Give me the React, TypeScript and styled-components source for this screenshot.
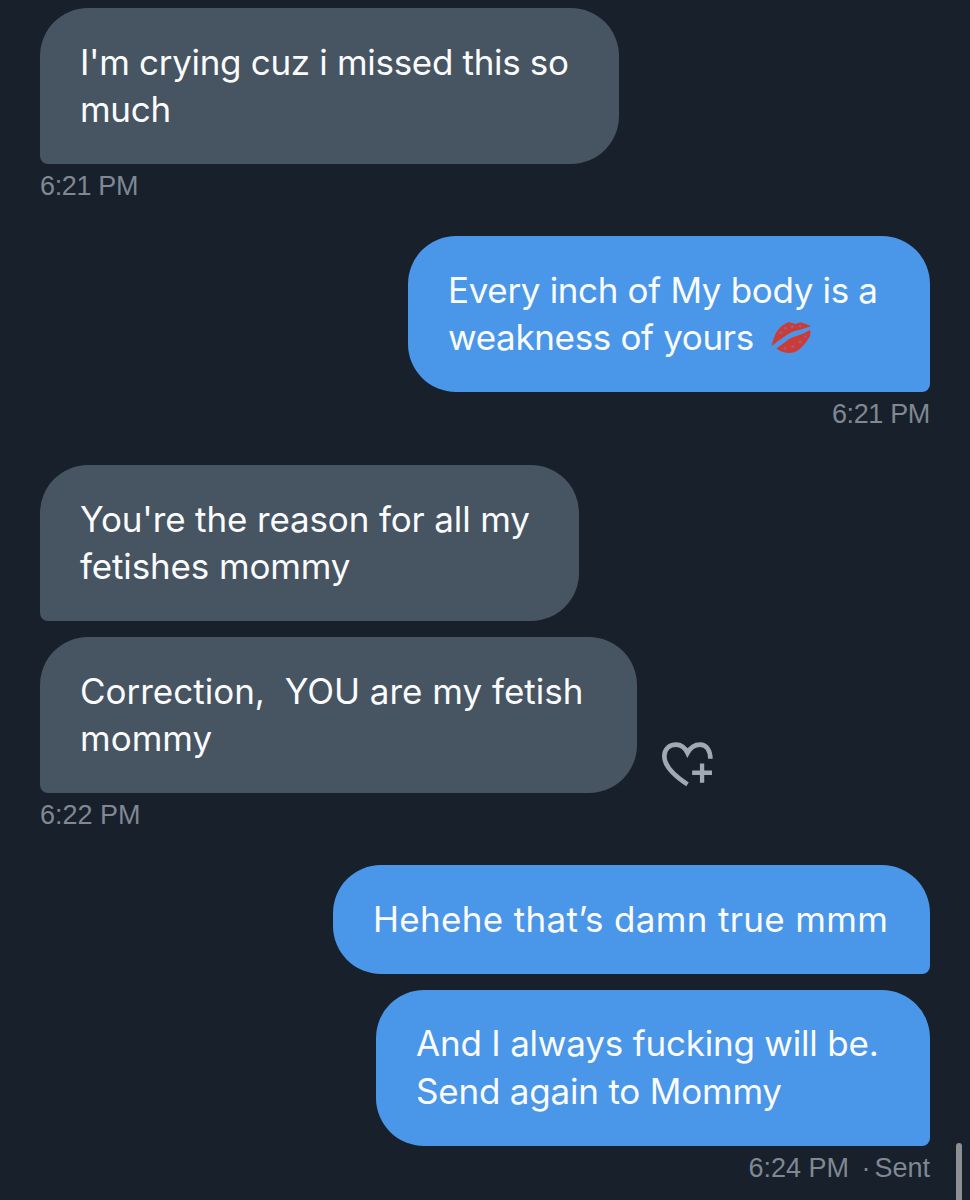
import React from "react";
import styled, { createGlobalStyle } from "styled-components";

const GlobalStyle = createGlobalStyle`
  html, body {
    margin: 0;
    padding: 0;
    background: #18202b;
  }
`;

const Page = styled.div`
  position: relative;
  box-sizing: border-box;
  width: 970px;
  height: 1200px;
  padding: 8px 40px 0;
  overflow: hidden;
  display: flex;
  flex-direction: column;
  font-family: "Inter", "Liberation Sans", sans-serif;
`;

const Group = styled.div<{ $mine?: boolean; $gap: number }>`
  display: flex;
  flex-direction: column;
  align-items: ${(p) => (p.$mine ? "flex-end" : "flex-start")};
  margin-bottom: ${(p) => p.$gap}px;
`;

const Row = styled.div`
  display: flex;
  align-items: flex-end;

  & + & {
    margin-top: 16px;
  }
`;

const Bubble = styled.div<{ $mine?: boolean; $width: number; $spacing?: number }>`
  box-sizing: border-box;
  width: ${(p) => p.$width}px;
  padding: 30.5px 0 30.5px 40px;
  font-size: 35px;
  line-height: 47.5px;
  letter-spacing: ${(p) => p.$spacing ?? 0}px;
  color: #fafbfc;
  white-space: nowrap;
  background: ${(p) => (p.$mine ? "#4a97e9" : "#475461")};
  border-radius: ${(p) => (p.$mine ? "48px 48px 8px 48px" : "48px 48px 48px 8px")};
`;

const Stamp = styled.div<{ $spacing?: number }>`
  margin-top: 10px;
  font-family: "Liberation Sans", Arial, sans-serif;
  font-size: 27px;
  line-height: 24px;
  letter-spacing: ${(p) => p.$spacing ?? 0}px;
  color: #7f8893;
`;

const SentMark = styled.span`
  margin-left: 5px;
  word-spacing: -3.5px;
`;

const LikeButton = styled.svg`
  width: 53px;
  height: 47px;
  margin: 0 0 6px 24px;
  fill: none;
  stroke: #a1a9b4;
  stroke-width: 14;
`;

const Kiss = styled.svg`
  width: 43px;
  height: 35px;
  margin-left: 16px;
  vertical-align: -5px;
`;

const ScrollThumb = styled.div`
  position: absolute;
  left: 956px;
  top: 1143px;
  width: 6px;
  height: 60px;
  border-radius: 3px;
  background: #8c8f94;
`;

const KissMark = () => (
  <Kiss viewBox="15 20 130 105">
    <path
      d="M20 98 C22 90 24 82 28 72 C30 62 36 54 42 46 C48 40 54 36 60 32 C66 28 72 26 77 27 C82 28 87 31 92 32 C97 29 104 26 110 27 C120 30 130 34 139 38 C120 46 105 50 92 52 C75 56 50 75 20 98Z"
      fill="#cc3b36"
    />
    <path
      d="M34 106 C55 92 75 72 95 68 C110 64 125 56 136 50 C140 60 136 70 130 78 C126 86 120 92 114 98 C108 106 100 112 90 116 C80 120 70 120 60 118 C50 116 42 112 34 106Z"
      fill="#cc3b36"
    />
    <g fill="#7f6fa8" opacity="0.7">
      <circle cx="48" cy="58" r="5" />
      <circle cx="62" cy="44" r="5" />
      <circle cx="82" cy="40" r="5" />
      <circle cx="106" cy="38" r="4" />
      <circle cx="60" cy="106" r="4" />
      <circle cx="84" cy="100" r="5" />
      <circle cx="106" cy="86" r="5" />
      <circle cx="122" cy="70" r="4" />
    </g>
  </Kiss>
);

export default function App() {
  return (
    <Page>
      <GlobalStyle />
      <Group $gap={38}>
        <Row>
          <Bubble $width={579} $spacing={-0.32}>
            I'm crying cuz i missed this so
            <br />
            much
          </Bubble>
        </Row>
        <Stamp $spacing={-0.35}>6:21 PM</Stamp>
      </Group>
      <Group $mine $gap={39}>
        <Row>
          <Bubble $mine $width={522} $spacing={-0.34}>
            Every inch of My body is a
            <br />
            weakness of yours
            <KissMark />
          </Bubble>
        </Row>
        <Stamp $spacing={-0.35}>6:21 PM</Stamp>
      </Group>
      <Group $gap={38}>
        <Row>
          <Bubble $width={539} $spacing={-0.14}>
            You're the reason for all my
            <br />
            fetishes mommy
          </Bubble>
        </Row>
        <Row>
          <Bubble $width={597}>
            Correction,&nbsp; YOU are my fetish
            <br />
            mommy
          </Bubble>
          <LikeButton viewBox="120 60 160 140">
            <path d="M200 193 C165 170 130 142 130 108 C130 86 146 73 165 73 C180 73 193 83 200 98 C208 83 220 73 238 73 C257 73 269 90 269 116" />
            <path d="M214 158 H274 M244 130 V188" strokeWidth="13" />
          </LikeButton>
        </Row>
        <Stamp>6:22 PM</Stamp>
      </Group>
      <Group $mine $gap={0}>
        <Row>
          <Bubble $mine $width={597} $spacing={0.33}>
            Hehehe that’s damn true mmm
          </Bubble>
        </Row>
        <Row>
          <Bubble $mine $width={554} $spacing={-0.2}>
            And I always fucking will be.
            <br />
            Send again to Mommy
          </Bubble>
        </Row>
        <Stamp>
          6:24 PM <SentMark>· Sent</SentMark>
        </Stamp>
      </Group>
      <ScrollThumb />
    </Page>
  );
}
